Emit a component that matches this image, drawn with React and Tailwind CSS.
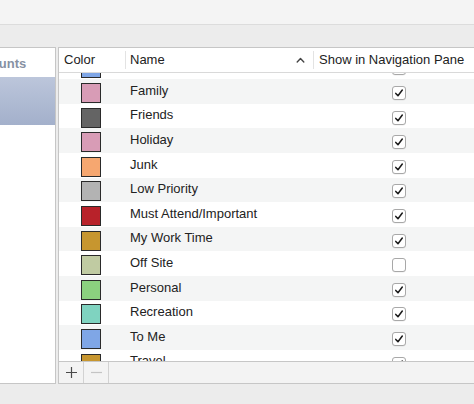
import React from "react";

const rows = [
  { name: "", color: "#7fa6e6", checked: true },
  { name: "Family", color: "#d89cb6", checked: true },
  { name: "Friends", color: "#646464", checked: true },
  { name: "Holiday", color: "#d89cb6", checked: true },
  { name: "Junk", color: "#f6a770", checked: true },
  { name: "Low Priority", color: "#b3b3b3", checked: true },
  { name: "Must Attend/Important", color: "#b8222a", checked: true },
  { name: "My Work Time", color: "#c7962f", checked: true },
  { name: "Off Site", color: "#c0cba2", checked: false },
  { name: "Personal", color: "#8bd17f", checked: true },
  { name: "Recreation", color: "#7fd3c0", checked: true },
  { name: "To Me", color: "#7fa6e6", checked: true },
  { name: "Travel", color: "#c7962f", checked: true },
];

function Check({ checked }) {
  return (
    <div className="w-[14px] h-[14px] mt-[3px] rounded-[3px] border border-[#a8a8a8] bg-white flex items-center justify-center shadow-[0_0.5px_0.5px_rgba(0,0,0,0.08)]">
      {checked && (
        <svg width="10" height="10" viewBox="0 0 10 10">
          <path d="M1.8 5.4 L4 7.8 L8.3 2" fill="none" stroke="#1a1a1a" strokeWidth="1.5" strokeLinecap="round" strokeLinejoin="round" />
        </svg>
      )}
    </div>
  );
}

export default function App() {
  return (
    <div className="w-[474px] h-[404px] bg-[#ececec] overflow-hidden flex flex-col font-['Liberation_Sans',Arial,sans-serif] text-[13px] text-[#222]">
      <div className="h-[25px] shrink-0 bg-[#f4f4f4] border-b border-[#dcdcdc]" />
      <div className="h-[22px] shrink-0" />
      <div className="h-[337px] shrink-0 flex">
        <div className="w-[56px] shrink-0 bg-white border-t border-r border-b border-[#c6c6c6] flex flex-col overflow-hidden">
          <div className="h-[29px] flex items-center overflow-hidden whitespace-nowrap">
            <span className="ml-[-33px] mt-[2px] font-bold text-[#8791a3]">Accounts</span>
          </div>
          <div className="h-[48px] bg-gradient-to-b from-[#bcc6db] to-[#a3b0cb]" />
        </div>
        <div className="w-[2px] shrink-0" />
        <div className="flex-1 flex flex-col bg-white border-t border-l border-b border-[#c6c6c6] overflow-hidden">
          <div className="h-[25px] shrink-0 flex border-b border-[#d9d9d9] items-center">
            <div className="w-[66px] shrink-0 pl-[5px] flex items-center h-full">Color</div>
            <div className="w-[1px] h-[18px] bg-[#e3e3e3]" />
            <div className="w-[187px] shrink-0 pl-[4px] pr-[8px] flex items-center justify-between h-full">
              <span>Name</span>
              <svg width="9" height="6" viewBox="0 0 9 6">
                <path d="M1.2 5 L4.5 1.6 L7.8 5" fill="none" stroke="#444" strokeWidth="1.4" strokeLinecap="round" strokeLinejoin="round" />
              </svg>
            </div>
            <div className="w-[1px] h-[18px] bg-[#e3e3e3]" />
            <div className="flex-1 pl-[5px] whitespace-nowrap flex items-center h-full">Show in Navigation Pane</div>
          </div>
          <div className="flex-1 overflow-hidden">
            <div className="mt-[-18.4px]">
              {rows.map((r, i) => (
                <div key={i} className={`h-[24.6px] flex items-center ${i % 2 === 1 ? "bg-[#f4f5f5]" : "bg-white"}`}>
                  <div className="w-[66px] shrink-0 pl-[22px] flex">
                    <div className="w-[20px] h-[20px] mt-[3px] border border-[#2a2a2a]" style={{ backgroundColor: r.color }} />
                  </div>
                  <div className="w-[1px]" />
                  <div className="w-[187px] shrink-0 pl-[4px] mb-[2px] whitespace-nowrap">{r.name}</div>
                  <div className="w-[1px]" />
                  <div className="flex-1 pl-[78px] flex">
                    <Check checked={r.checked} />
                  </div>
                </div>
              ))}
            </div>
          </div>
          <div className="h-[22px] shrink-0 flex border-t border-[#c6c6c6] bg-[#f3f3f3]">
            <div className="w-[25px] border-r border-[#d2d2d2] flex items-center justify-center">
              <svg width="13" height="13" viewBox="0 0 13 13">
                <path d="M6.5 1 V12 M1 6.5 H12" stroke="#4a4a4a" strokeWidth="1.2" />
              </svg>
            </div>
            <div className="w-[25px] border-r border-[#d2d2d2] flex items-center justify-center">
              <svg width="13" height="13" viewBox="0 0 13 13">
                <path d="M1 6.5 H12" stroke="#c4c4c4" strokeWidth="1.2" />
              </svg>
            </div>
          </div>
        </div>
      </div>
    </div>
  );
}
